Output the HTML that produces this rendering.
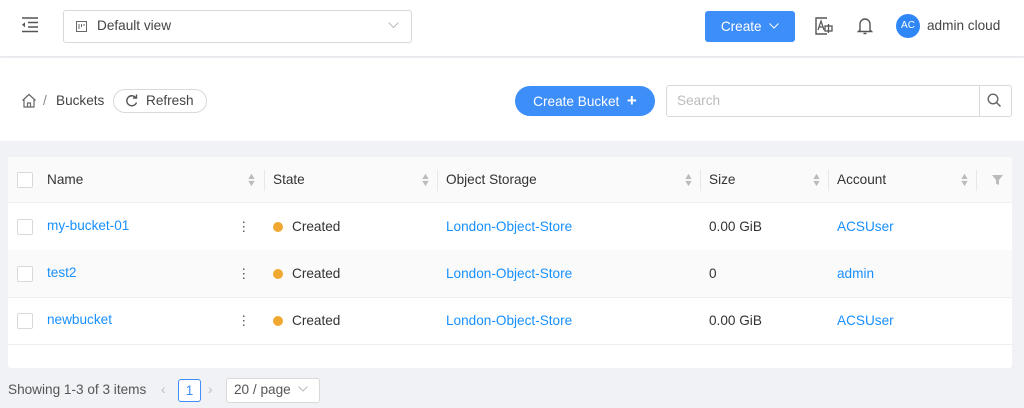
<!DOCTYPE html><html><head><style>
body{margin:0;width:1024px;height:408px;background:#f0f2f5;font-family:"Liberation Sans",sans-serif;font-size:13.6px;color:#333;position:relative;overflow:hidden}
.a{position:absolute}
a{color:#1890ff;text-decoration:none}
.cb{position:absolute;left:16px;width:14px;height:14px;border:1px solid #d9d9d9;border-radius:2px;background:#fff}
.row{position:absolute;left:8px;width:1004px;height:47px;border-bottom:1px solid #eee}
.row>*{position:absolute;top:16px}
.dot{width:10px;height:10px;border-radius:50%;background:#f0a830;top:19px!important}
.sep{position:absolute;top:13px;width:1px;height:21px;background:#e8e8e8}
.sort{position:absolute;top:16px;font-size:9px;color:#bbb;line-height:7px;transform:scaleX(1.2)}
</style></head><body>
<div class="a" style="left:0;top:0;width:1024px;height:56px;background:#fff;box-shadow:0 1px 3px rgba(0,0,0,.06)"></div>
<svg class="a" style="left:21px;top:17px" width="18" height="16"><path d="M1 1h16M7 5.5h10M7 10h10M1 14.5h16" stroke="#555" stroke-width="1.6"/><path d="M1 7.7l3-2.5v5z" fill="#555"/></svg>
<div class="a" style="left:63px;top:10px;width:347px;height:31px;border:1px solid #d9d9d9;border-radius:3px;background:#fff"></div>
<svg class="a" style="left:76px;top:21px" width="11" height="11"><rect x=".5" y=".5" width="10" height="10" fill="none" stroke="#666"/><path d="M3 3v5M5.5 3v3M8 3v2" stroke="#666"/></svg>
<div class="a" style="left:97px;top:18px;color:#444">Default view</div>
<svg class="a" style="left:388px;top:22px" width="11" height="7"><path d="M.5.5l5 5 5-5" fill="none" stroke="#bbb"/></svg>
<div class="a" style="left:705px;top:11px;width:90px;height:31px;background:#3d8ef8;border-radius:3px;color:#fff;line-height:31px;text-align:center">Create&nbsp; <svg width="10" height="6" style="vertical-align:2px"><path d="M.5.5l4.5 4.5 4.5-4.5" fill="none" stroke="#fff"/></svg></div>
<svg class="a" style="left:814px;top:16px" width="20" height="20"><path d="M13 2H2v16h11" fill="none" stroke="#555" stroke-width="1.4"/><path d="M4 14l3-9 3 9M5 11h4" fill="none" stroke="#555" stroke-width="1.2"/><rect x="11" y="10" width="7" height="5" fill="none" stroke="#555" stroke-width="1.3"/><path d="M14.5 8v9" stroke="#555" stroke-width="1.3"/></svg>
<svg class="a" style="left:857px;top:16px" width="16" height="20"><path d="M3 14V8a5 5 0 0110 0v6l1.5 1.5h-13z M6.5 17.5h3" fill="none" stroke="#555" stroke-width="1.4"/></svg>
<div class="a" style="left:896px;top:14px;width:24px;height:24px;border-radius:50%;background:#2f86f6;color:#fff;font-size:10px;line-height:24px;text-align:center">AC</div>
<div class="a" style="left:927px;top:18px;color:#444">admin cloud</div>
<div class="a" style="left:0;top:58px;width:1024px;height:83px;background:#fff"></div>
<svg class="a" style="left:21px;top:93px" width="16" height="15"><path d="M1.5 7.5L8 1.5l6.5 6M3 6.5V14h10V6.5M6.5 14v-4h3v4" fill="none" stroke="#666" stroke-width="1.2"/></svg>
<div class="a" style="left:43px;top:93px;color:#888">/</div>
<div class="a" style="left:56px;top:93px;color:#444">Buckets</div>
<div class="a" style="left:113px;top:89px;width:92px;height:22px;border:1px solid #d9d9d9;border-radius:12px;background:#fff"></div>
<svg class="a" style="left:125px;top:94px" width="13" height="13"><path d="M11 4A5 5 0 1 0 11.5 8.5" fill="none" stroke="#555" stroke-width="1.4"/><path d="M8 4h3.5V0.5" fill="none" stroke="#555" stroke-width="1.4"/></svg>
<div class="a" style="left:146px;top:93px;color:#444">Refresh</div>
<div class="a" style="left:515px;top:86px;width:140px;height:30px;border-radius:15px;background:#3d8ef8;color:#fff;line-height:30px;text-align:center">Create Bucket &nbsp;<b style="font-size:17px">+</b></div>
<div class="a" style="left:666px;top:85px;width:344px;height:30px;border:1px solid #d9d9d9;border-radius:3px;background:#fff"></div>
<div class="a" style="left:979px;top:86px;width:1px;height:30px;background:#d9d9d9"></div>
<div class="a" style="left:677px;top:93px;color:#bbb">Search</div>
<svg class="a" style="left:987px;top:93px" width="15" height="15"><circle cx="6" cy="6" r="4.8" fill="none" stroke="#666" stroke-width="1.4"/><path d="M9.5 9.5l4 4" stroke="#666" stroke-width="1.5"/></svg>
<div class="a" style="left:8px;top:157px;width:1004px;height:211px;background:#fff;border-radius:3px"></div>
<div class="row" style="top:157px;background:#fafafa;border-bottom:1px solid #eee;height:45px">
<div class="cb" style="left:9px;top:15px"></div>
<span style="left:39px;top:15px">Name</span><div class="sort" style="left:239px">&#9650;<br>&#9660;</div><div class="sep" style="left:256px"></div>
<span style="left:265px;top:15px">State</span><div class="sort" style="left:413px">&#9650;<br>&#9660;</div><div class="sep" style="left:429px"></div>
<span style="left:438px;top:15px">Object Storage</span><div class="sort" style="left:676px">&#9650;<br>&#9660;</div><div class="sep" style="left:692px"></div>
<span style="left:701px;top:15px">Size</span><div class="sort" style="left:804px">&#9650;<br>&#9660;</div><div class="sep" style="left:820px"></div>
<span style="left:829px;top:15px">Account</span><div class="sort" style="left:952px">&#9650;<br>&#9660;</div><div class="sep" style="left:968px"></div>
<svg style="position:absolute;left:984px;top:18px" width="11" height="10"><path d="M0 0h11L7 5v5L4 8.5V5z" fill="#bbb"/></svg>
</div>
<div class="row" style="top:203px"><div class="cb" style="left:9px"></div><a style="left:39px;top:15px">my-bucket-01</a><span style="left:229px;color:#555">&#8942;</span><div class="dot" style="left:265px"></div><span style="left:284px">Created</span><a style="left:438px">London-Object-Store</a><span style="left:701px">0.00 GiB</span><a style="left:829px">ACSUser</a></div>
<div class="row" style="top:250px;background:#fafafa"><div class="cb" style="left:9px"></div><a style="left:39px;top:15px">test2</a><span style="left:229px;color:#555">&#8942;</span><div class="dot" style="left:265px"></div><span style="left:284px">Created</span><a style="left:438px">London-Object-Store</a><span style="left:701px">0</span><a style="left:829px">admin</a></div>
<div class="row" style="top:297px"><div class="cb" style="left:9px"></div><a style="left:39px;top:15px">newbucket</a><span style="left:229px;color:#555">&#8942;</span><div class="dot" style="left:265px"></div><span style="left:284px">Created</span><a style="left:438px">London-Object-Store</a><span style="left:701px">0.00 GiB</span><a style="left:829px">ACSUser</a></div>
<div class="a" style="left:8px;top:382px;color:#555">Showing 1-3 of 3 items</div>
<div class="a" style="left:161px;top:382px;color:#bbb">&lsaquo;</div>
<div class="a" style="left:178px;top:379px;width:21px;height:21px;border:1px solid #3d8ef8;border-radius:3px;background:#fff;color:#3d8ef8;text-align:center;line-height:21px">1</div>
<div class="a" style="left:208px;top:382px;color:#bbb">&rsaquo;</div>
<div class="a" style="left:226px;top:378px;width:92px;height:23px;border:1px solid #d9d9d9;border-radius:3px;background:#fff"></div>
<div class="a" style="left:234px;top:382px;color:#555">20 / page&nbsp; <svg width="10" height="6" style="vertical-align:2px"><path d="M.5.5l4.5 4.5 4.5-4.5" fill="none" stroke="#bbb"/></svg></div>
</body></html>
